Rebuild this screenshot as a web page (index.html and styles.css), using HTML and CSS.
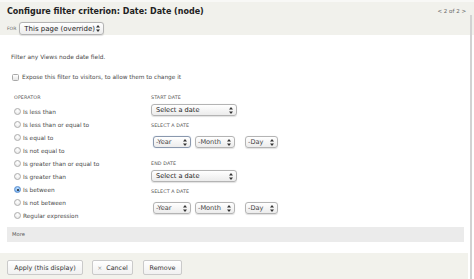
FILE: index.html
```html
<!DOCTYPE html>
<html>
<head>
<meta charset="utf-8">
<link rel="stylesheet" href="styles.css">
</head>
<body>
<div class="page">
  <div class="header">
    <div class="title-row">
      <h1 class="title">Configure filter criterion: Date: Date (node)</h1>
      <span class="pager">&lt; 2 of 2 &gt;</span>
    </div>
    <div class="for-row">
      <span class="for-label">For</span>
      <div class="sel sel-for"><span>This page (override)</span><svg class="arr" viewBox="0 0 4 7" width="4" height="7"><path d="M2 0L4 2.6H0Z M2 7L0 4.4H4Z"/></svg></div>
    </div>
  </div>
  <div class="content">
    <p class="desc">Filter any Views node date field.</p>
    <label class="check-row"><span class="checkbox"></span>Expose this filter to visitors, to allow them to change it</label>
    <div class="columns">
      <div class="col-op">
        <div class="cap">Operator</div>
        <div class="radio-row"><span class="radio"></span>Is less than</div>
        <div class="radio-row"><span class="radio"></span>Is less than or equal to</div>
        <div class="radio-row"><span class="radio"></span>Is equal to</div>
        <div class="radio-row"><span class="radio"></span>Is not equal to</div>
        <div class="radio-row"><span class="radio"></span>Is greater than or equal to</div>
        <div class="radio-row"><span class="radio"></span>Is greater than</div>
        <div class="radio-row"><span class="radio on"></span>Is between</div>
        <div class="radio-row"><span class="radio"></span>Is not between</div>
        <div class="radio-row"><span class="radio"></span>Regular expression</div>
      </div>
      <div class="col-date">
        <div class="date-block">
          <div class="cap">Start date</div>
          <div class="sel sel-wide"><span>Select a date</span><svg class="arr" viewBox="0 0 4 7" width="4" height="7"><path d="M2 0L4 2.6H0Z M2 7L0 4.4H4Z"/></svg></div>
          <div class="cap cap-sub">Select a date</div>
          <div class="ymd">
            <div class="sel sel-year focus"><span>-Year</span><svg class="arr" viewBox="0 0 4 7" width="4" height="7"><path d="M2 0L4 2.6H0Z M2 7L0 4.4H4Z"/></svg></div>
            <div class="sel sel-month"><span>-Month</span><svg class="arr" viewBox="0 0 4 7" width="4" height="7"><path d="M2 0L4 2.6H0Z M2 7L0 4.4H4Z"/></svg></div>
            <div class="sel sel-day"><span>-Day</span><svg class="arr" viewBox="0 0 4 7" width="4" height="7"><path d="M2 0L4 2.6H0Z M2 7L0 4.4H4Z"/></svg></div>
          </div>
        </div>
        <div class="date-block end">
          <div class="cap">End date</div>
          <div class="sel sel-wide"><span>Select a date</span><svg class="arr" viewBox="0 0 4 7" width="4" height="7"><path d="M2 0L4 2.6H0Z M2 7L0 4.4H4Z"/></svg></div>
          <div class="cap cap-sub">Select a date</div>
          <div class="ymd">
            <div class="sel sel-year"><span>-Year</span><svg class="arr" viewBox="0 0 4 7" width="4" height="7"><path d="M2 0L4 2.6H0Z M2 7L0 4.4H4Z"/></svg></div>
            <div class="sel sel-month"><span>-Month</span><svg class="arr" viewBox="0 0 4 7" width="4" height="7"><path d="M2 0L4 2.6H0Z M2 7L0 4.4H4Z"/></svg></div>
            <div class="sel sel-day"><span>-Day</span><svg class="arr" viewBox="0 0 4 7" width="4" height="7"><path d="M2 0L4 2.6H0Z M2 7L0 4.4H4Z"/></svg></div>
          </div>
        </div>
      </div>
    </div>
    <div class="more">More</div>
  </div>
  <div class="footer">
    <button class="btn btn-apply">Apply (this display)</button>
    <button class="btn btn-cancel"><span class="x">×</span>Cancel</button>
    <button class="btn btn-remove">Remove</button>
  </div>
  <div class="scrollbar"></div>
</div>
</body>
</html>
```

FILE: styles.css
```css
* { box-sizing: border-box; }
html, body { margin: 0; padding: 0; background: #fff; }
body {
  font-family: "DejaVu Sans", "Noto Sans", sans-serif;
  color: #4a4a4a;
  width: 474px;
  height: 279px;
  overflow: hidden;
}
.page { position: relative; width: 474px; height: 279px; }

.header {
  background: #f1f1ec;
  height: 35px;
  padding: 4px 8px 0 7px;
  border-top: 2px solid #f8f8f6;
}
.title-row {
  display: flex;
  justify-content: space-between;
  align-items: center;
  height: 11px;
}
.title {
  margin: 0;
  font-size: 8px;
  font-weight: bold;
  color: #222;
  line-height: 11px;
}
.pager {
  font-size: 5.5px;
  color: #666;
  line-height: 11px;
}
.for-row {
  display: flex;
  align-items: center;
  gap: 3px;
  margin-top: 5px;
}
.for-label {
  font-size: 4.5px;
  text-transform: uppercase;
  color: #666;
}

.sel {
  display: flex;
  align-items: center;
  justify-content: space-between;
  height: 12px;
  border: 1px solid #b4b4b4;
  border-radius: 3px;
  background: linear-gradient(#ffffff, #ececec);
  box-shadow: 0 0.5px 1px rgba(0,0,0,0.12);
  font-size: 6.6px;
  color: #222;
  padding: 0 3px 0 4px;
  white-space: nowrap;
}
.arr { fill: #333; flex: none; }
.sel-for { width: 85px; height: 13px; font-size: 7px; }
.sel-wide { width: 86px; margin-top: 1px; }
.sel-year { width: 38px; }
.sel-month { width: 40px; }
.sel-day { width: 33px; }
.sel-year, .sel-month, .sel-day { color: #444; padding-left: 2px; }
.sel.focus { border-color: #8a98ad; box-shadow: 0 0 1px #9fb3cf; }

.content {
  width: 468px;
  padding: 0 0 11px 0;
}
.desc {
  margin: 17px 0 0 11px;
  font-size: 5.9px;
  line-height: 10px;
}
.check-row {
  display: flex;
  align-items: center;
  margin: 10px 0 0 12px;
  font-size: 5.8px;
  line-height: 10px;
}
.checkbox {
  width: 7px; height: 7px;
  border: 1px solid #a8a8a8;
  border-radius: 1.5px;
  background: linear-gradient(#fff, #e6e6e6);
  margin-right: 3px;
  flex: none;
}

.columns {
  display: flex;
  margin-top: 11px;
  padding-left: 14px;
}
.col-op { width: 137px; }
.cap {
  font-size: 4.8px;
  text-transform: uppercase;
  line-height: 10px;
  color: #555;
  letter-spacing: 0.1px;
}
.col-op .cap { margin-bottom: 2px; }
.radio-row {
  display: flex;
  align-items: center;
  height: 13px;
  font-size: 5.8px;
}
.radio {
  width: 7px; height: 7px;
  border-radius: 50%;
  border: 1px solid #adadad;
  background: radial-gradient(circle at 50% 35%, #ffffff, #e4e4e4);
  margin-right: 2px;
  flex: none;
  position: relative;
}
.radio.on {
  border-color: #5b8fd0;
  background: radial-gradient(circle at 50% 35%, #bfe0ff, #6aa8ee);
}
.radio.on::after {
  content: "";
  position: absolute;
  left: 1.5px; top: 1.5px;
  width: 2px; height: 2px;
  border-radius: 50%;
  background: #222;
}

.col-date { width: 140px; }
.date-block.end { margin-top: 11px; }
.cap-sub { margin-top: 5px; }
.ymd {
  display: flex;
  margin-top: 5px;
  padding-left: 2px;
}
.sel-month { margin-left: 4px; }
.sel-day { margin-left: 10px; }

.more {
  margin: 5px 0 0 7px;
  width: 457px;
  height: 15px;
  background: #ebebeb;
  font-size: 5.2px;
  line-height: 15px;
  padding-left: 5px;
  color: #555;
}

.footer {
  width: 468px;
  height: 26px;
  background: #f2f2ec;
  display: flex;
  align-items: flex-start;
  padding: 7px 0 0 7px;
}
.btn {
  height: 15px;
  border: 1px solid #cacaca;
  border-radius: 2px;
  background: linear-gradient(#ffffff, #f1f1f1);
  font-family: "DejaVu Sans", "Noto Sans", sans-serif;
  font-size: 6.4px;
  color: #333;
  padding: 0;
  display: flex;
  align-items: center;
  justify-content: center;
}
.btn-apply { width: 76px; }
.btn-cancel { width: 41px; margin-left: 9px; }
.btn-remove { width: 39px; margin-left: 10px; }
.x { color: #999; margin-right: 4px; font-size: 6px; }

.scrollbar {
  position: absolute;
  left: 470px;
  top: 15px;
  bottom: 0;
  width: 2px;
  background: #d2d2d2;
}
```
